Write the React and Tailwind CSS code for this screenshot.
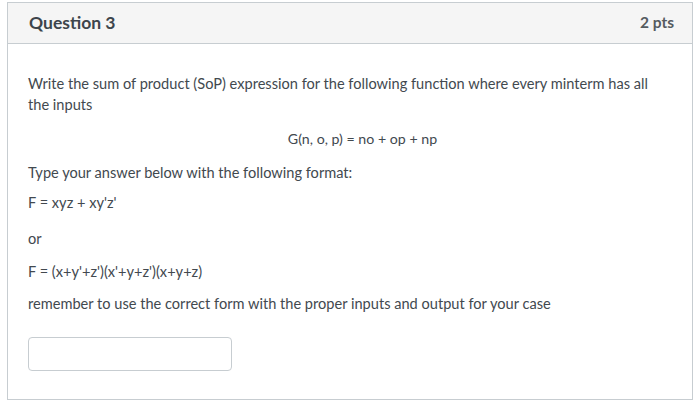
import React from 'react';

const QuestionCard = () => {
  return (
    <div className="ml-[7px] mt-[2px] w-[686px] border border-[#c7cdd1] bg-white font-['Lato','Liberation_Sans',sans-serif] text-[#2d3b45]">
      {/* Header */}
      <div className="flex h-[41px] items-center justify-between border-b border-[#c7cdd1] bg-[#f5f5f5] pl-[21px] pr-[18px]">
        <h2 className="text-[17.5px] font-bold text-[#3d454c]">Question 3</h2>
        <span className="text-[15.5px] font-bold text-[#555b60]">2 pts</span>
      </div>

      {/* Body */}
      <div className="px-[20px] pt-[29px] pb-[28px] text-[14.6px] leading-[21px] text-[#42494f]">
        <p>
          Write the sum of product (SoP) expression for the following function where every minterm has all
          <br />
          the inputs
        </p>
        <p className="mt-[13px] pl-[25px] text-center text-[14.2px]">G(n, o, p) = no + op + np</p>
        <p className="mt-[13px]">Type your answer below with the following format:</p>
        <p className="mt-[9px]">F = xyz + xy'z'</p>
        <p className="mt-[15px]">or</p>
        <p className="mt-[12px]">F = (x+y'+z')(x'+y+z')(x+y+z)</p>
        <p className="mt-[11px]">remember to use the correct form with the proper inputs and output for your case</p>
        <input
          type="text"
          className="mt-[23px] block h-[34px] w-[204px] rounded-[4px] border border-[#c7cdd1] bg-white px-2 text-[13px] outline-none"
        />
      </div>
    </div>
  );
};

export default function App() {
  return (
    <div className="h-[410px] w-[700px] bg-white">
      <QuestionCard />
    </div>
  );
}
